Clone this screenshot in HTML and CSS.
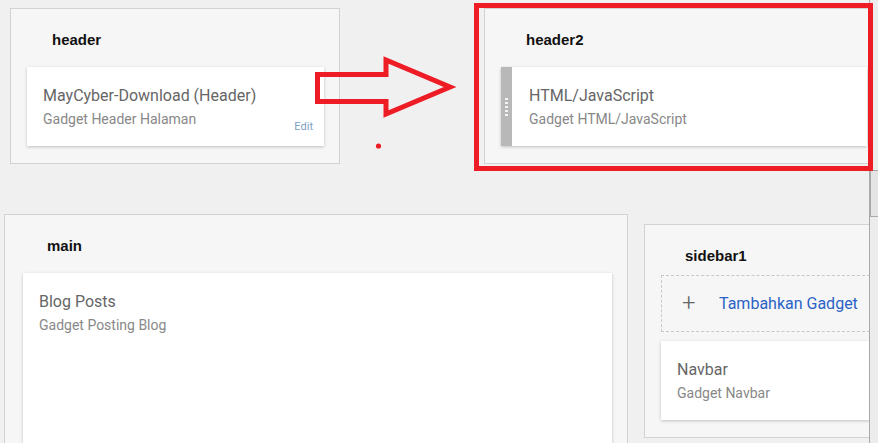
FILE: index.html
```html
<!DOCTYPE html>
<html>
<head>
<meta charset="utf-8">
<link rel="stylesheet" href="styles.css">
</head>
<body>
<div class="page">
  <div class="row row-top">
    <section class="area area-header">
      <h2 class="area-title">header</h2>
      <div class="gadget">
        <div class="gadget-body">
          <div class="g-title">MayCyber-Download (Header)</div>
          <div class="g-sub">Gadget Header Halaman</div>
          <a class="g-edit">Edit</a>
        </div>
      </div>
    </section>
    <section class="area area-header2">
      <h2 class="area-title">header2</h2>
      <div class="gadget">
        <div class="handle"><span></span><span></span><span></span><span></span><span></span></div>
        <div class="gadget-body">
          <div class="g-title">HTML/JavaScript</div>
          <div class="g-sub">Gadget HTML/JavaScript</div>
        </div>
      </div>
    </section>
  </div>
  <div class="row row-bottom">
    <section class="area area-main">
      <h2 class="area-title">main</h2>
      <div class="gadget gadget-tall">
        <div class="gadget-body">
          <div class="g-title">Blog Posts</div>
          <div class="g-sub">Gadget Posting Blog</div>
        </div>
      </div>
    </section>
    <section class="area area-sidebar">
      <h2 class="area-title">sidebar1</h2>
      <div class="add-gadget"><span class="plus">+</span><span class="add-text">Tambahkan Gadget</span></div>
      <div class="gadget">
        <div class="gadget-body">
          <div class="g-title">Navbar</div>
          <div class="g-sub">Gadget Navbar</div>
        </div>
      </div>
    </section>
  </div>
  <div class="edge-strip"><div class="edge-box"></div></div>
  <svg class="annot-arrow" width="878" height="443" viewBox="0 0 878 443">
    <polygon points="317.5,74.5 386,74.5 386,60 450,87 386,114 386,101.5 317.5,101.5" fill="none" stroke="#ee1c25" stroke-width="5" stroke-linejoin="miter"/>
    <circle cx="378.5" cy="146" r="2.6" fill="#ee1c25"/>
  </svg>
  <div class="annot-rect"></div>
</div>
</body>
</html>
```
FILE: styles.css
```css
html, body {
  margin: 0;
  padding: 0;
}
body {
  background: #f0f0f0;
  font-family: Roboto, "Liberation Sans", Arial, sans-serif;
}
.page {
  position: relative;
  width: 878px;
  height: 443px;
  overflow: hidden;
  background: #f0f0f0;
}
.row {
  display: flex;
  align-items: flex-start;
}
.row-top {
  padding-top: 8px;
  padding-left: 10px;
  gap: 144px;
}
.row-bottom {
  margin-top: 50px;
  padding-left: 4px;
  gap: 16px;
}
.area {
  box-sizing: border-box;
  background: #f6f6f6;
  border: 1px solid #d2d2d2;
  padding: 20px 0 0 16px;
}
.area-title {
  margin: 0 0 17px 25px;
  font-family: "Liberation Sans", Arial, sans-serif;
  font-weight: bold;
  font-size: 15px;
  line-height: 21px;
  color: #111;
}
.area-header {
  width: 330px;
  height: 156px;
}
.area-header2 {
  width: 386px;
  height: 156px;
  padding-right: 2px;
}
.area-main {
  width: 624px;
  height: 260px;
  padding-left: 18px;
  padding-right: 15px;
}
.area-main .area-title {
  margin-left: 24px;
}
.area-sidebar {
  margin-top: 10px;
  width: 226px;
  height: 214px;
  padding-right: 0;
  border-right: none;
}
.area-sidebar .area-title {
  margin-bottom: 9px;
  margin-left: 24px;
}
.gadget {
  display: flex;
  background: #fff;
  box-shadow: 0 1px 3px rgba(0, 0, 0, 0.22);
  height: 79px;
  margin-right: 15px;
}
.area-header2 .gadget,
.area-sidebar .gadget {
  margin-right: 0;
}
.gadget-tall {
  height: 200px;
  margin-right: 0;
}
.handle {
  width: 11px;
  flex: none;
  background: #b8b8b8;
  display: flex;
  flex-direction: column;
  align-items: center;
  justify-content: center;
  gap: 2px;
}
.handle span {
  display: block;
  width: 3px;
  height: 2px;
  background: #f4f4f4;
}
.gadget-body {
  position: relative;
  flex: 1;
  padding: 19px 0 0 16px;
}
.area-header2 .gadget-body {
  padding-left: 17px;
}
.g-title {
  font-size: 16px;
  line-height: 20px;
  color: #666;
}
.g-sub {
  margin-top: 4px;
  font-size: 14px;
  line-height: 18px;
  color: #888;
}
.g-edit {
  position: absolute;
  right: 11px;
  bottom: 12px;
  font-size: 11px;
  line-height: 14px;
  color: #7d9fc6;
}
.add-gadget {
  box-sizing: border-box;
  height: 57px;
  border: 1px dashed #c8c8c8;
  border-right: none;
  display: flex;
  align-items: center;
  padding-left: 20px;
  margin-bottom: 9px;
}
.plus {
  font-size: 24px;
  font-weight: 300;
  color: #666;
  line-height: 24px;
  width: 37px;
  margin-top: -2px;
}
.add-text {
  font-size: 16px;
  color: #2a62c6;
}
.edge-strip {
  position: absolute;
  top: 0;
  right: 0;
  width: 8px;
  height: 443px;
  border-left: 1px solid #a8a8a8;
  background: #ececec;
}
.edge-box {
  margin-top: 170px;
  height: 45px;
  border: 1px solid #aaa;
  border-right: none;
  background: #e4e4e4;
}
.annot-arrow {
  position: absolute;
  left: 0;
  top: 0;
  pointer-events: none;
}
.annot-rect {
  position: absolute;
  left: 474px;
  top: 3px;
  width: 389px;
  height: 158px;
  border: 5px solid #ee1c25;
}
```
